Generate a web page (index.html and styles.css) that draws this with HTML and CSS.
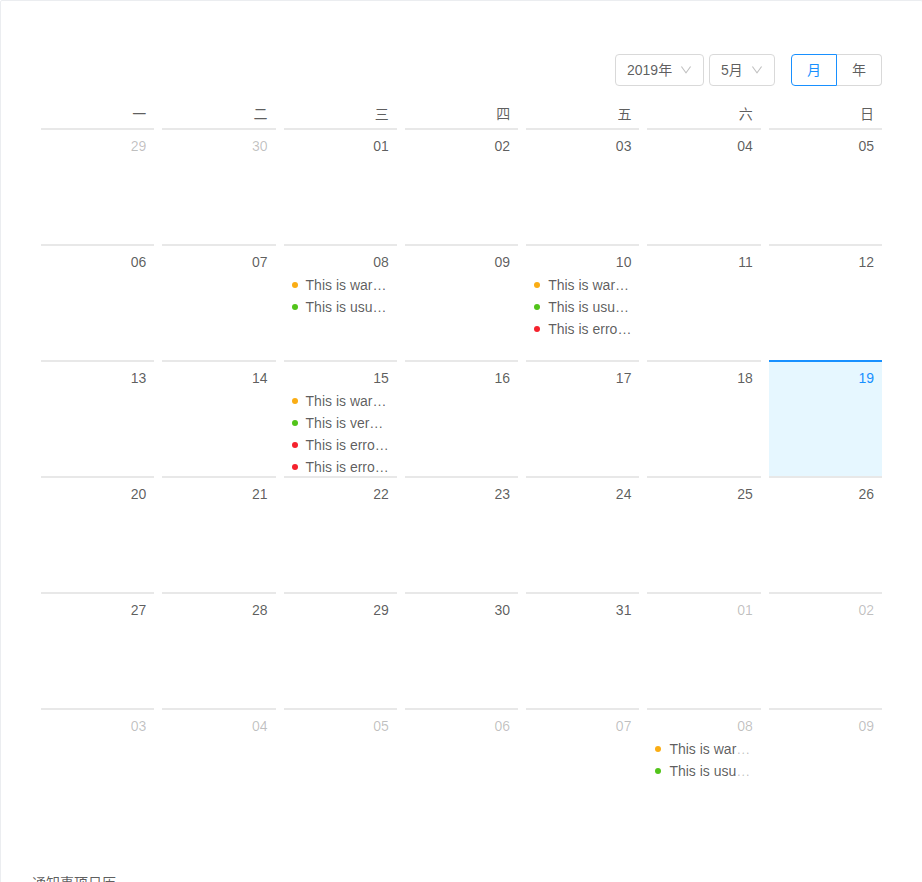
FILE: index.html
```html
<!DOCTYPE html>
<html lang="zh">
<head>
<meta charset="utf-8">
<title>通知事项日历</title>
<link rel="stylesheet" href="styles.css">
</head>
<body>
<div class="code-box">
  <div class="demo">
    <div class="cal-header">
      <div class="select year-select"><span>2019年</span><svg class="arrow" viewBox="64 64 896 896"><path d="M884 256h-75c-5.1 0-9.9 2.5-12.9 7L512 654.2 227.9 263c-3-4.5-7.8-7-12.9-7h-75c-6.5 0-10.3 7.4-6.5 12.7l352.6 486.1c12.8 17.6 39 17.6 51.7 0l352.6-486.1c3.900-5.3.1-12.7-6.4-12.7z"/></svg></div>
      <div class="select month-select"><span>5月</span><svg class="arrow" viewBox="64 64 896 896"><path d="M884 256h-75c-5.1 0-9.9 2.5-12.9 7L512 654.2 227.9 263c-3-4.5-7.8-7-12.9-7h-75c-6.5 0-10.3 7.4-6.5 12.7l352.6 486.1c12.8 17.6 39 17.6 51.7 0l352.6-486.1c3.900-5.3.1-12.7-6.4-12.7z"/></svg></div>
      <div class="radio-group">
        <span class="radio-btn checked">月</span><span class="radio-btn">年</span>
      </div>
    </div>
    <div class="cal-body">
      <div class="grid week">
        <div class="th">一</div><div class="th">二</div><div class="th">三</div><div class="th">四</div><div class="th">五</div><div class="th">六</div><div class="th">日</div>
      </div>
      <div class="grid days">
        <div class="day other"><div class="val">29</div></div>
        <div class="day other"><div class="val">30</div></div>
        <div class="day"><div class="val">01</div></div>
        <div class="day"><div class="val">02</div></div>
        <div class="day"><div class="val">03</div></div>
        <div class="day"><div class="val">04</div></div>
        <div class="day"><div class="val">05</div></div>

        <div class="day"><div class="val">06</div></div>
        <div class="day"><div class="val">07</div></div>
        <div class="day"><div class="val">08</div>
          <ul class="events">
            <li><i class="dot warning"></i><span class="txt">This is warning event.</span></li>
            <li><i class="dot success"></i><span class="txt">This is usual event.</span></li>
          </ul>
        </div>
        <div class="day"><div class="val">09</div></div>
        <div class="day"><div class="val">10</div>
          <ul class="events">
            <li><i class="dot warning"></i><span class="txt">This is warning event.</span></li>
            <li><i class="dot success"></i><span class="txt">This is usual event.</span></li>
            <li><i class="dot error"></i><span class="txt">This is error event.</span></li>
          </ul>
        </div>
        <div class="day"><div class="val">11</div></div>
        <div class="day"><div class="val">12</div></div>

        <div class="day"><div class="val">13</div></div>
        <div class="day"><div class="val">14</div></div>
        <div class="day"><div class="val">15</div>
          <ul class="events">
            <li><i class="dot warning"></i><span class="txt">This is warning event</span></li>
            <li><i class="dot success"></i><span class="txt">This is very long usual event。。....</span></li>
            <li><i class="dot error"></i><span class="txt">This is error event 1.</span></li>
            <li><i class="dot error"></i><span class="txt">This is error event 2.</span></li>
          </ul>
        </div>
        <div class="day"><div class="val">16</div></div>
        <div class="day"><div class="val">17</div></div>
        <div class="day"><div class="val">18</div></div>
        <div class="day today"><div class="val">19</div></div>

        <div class="day"><div class="val">20</div></div>
        <div class="day"><div class="val">21</div></div>
        <div class="day"><div class="val">22</div></div>
        <div class="day"><div class="val">23</div></div>
        <div class="day"><div class="val">24</div></div>
        <div class="day"><div class="val">25</div></div>
        <div class="day"><div class="val">26</div></div>

        <div class="day"><div class="val">27</div></div>
        <div class="day"><div class="val">28</div></div>
        <div class="day"><div class="val">29</div></div>
        <div class="day"><div class="val">30</div></div>
        <div class="day"><div class="val">31</div></div>
        <div class="day other"><div class="val">01</div></div>
        <div class="day other"><div class="val">02</div></div>

        <div class="day other"><div class="val">03</div></div>
        <div class="day other"><div class="val">04</div></div>
        <div class="day other"><div class="val">05</div></div>
        <div class="day other"><div class="val">06</div></div>
        <div class="day other"><div class="val">07</div></div>
        <div class="day other"><div class="val">08</div>
          <ul class="events">
            <li><i class="dot warning"></i><span class="txt">This is warning event.</span></li>
            <li><i class="dot success"></i><span class="txt">This is usual event.</span></li>
          </ul>
        </div>
        <div class="day other"><div class="val">09</div></div>
      </div>
    </div>
  </div>
  <div class="meta">
    <div class="title">通知事项日历</div>
  </div>
</div>
</body>
</html>
```

FILE: styles.css
```css
html, body {
  margin: 0;
  padding: 0;
  overflow: hidden;
  background: #fff;
}
* { box-sizing: border-box; }
body {
  font-family: "Liberation Sans", "Noto Sans CJK SC", sans-serif;
  font-size: 14px;
  color: rgba(0, 0, 0, 0.65);
  line-height: 1.5;
}
.code-box {
  width: 923px;
  border: 1px solid #ebedf0;
  border-radius: 2px;
}
.demo {
  padding: 42px 24px 50px;
  border-bottom: 1px solid #ebedf0;
}
.cal-header {
  display: flex;
  justify-content: flex-end;
  align-items: center;
  padding: 11px 16px 11px 0;
}
.select {
  height: 32px;
  border: 1px solid #d9d9d9;
  border-radius: 4px;
  display: flex;
  align-items: center;
  justify-content: space-between;
  padding: 0 11px;
  color: rgba(0, 0, 0, 0.65);
  line-height: 30px;
}
.year-select { width: 89px; }
.month-select { width: 66px; margin-left: 5px; }
.arrow {
  width: 12px;
  height: 12px;
  fill: rgba(0, 0, 0, 0.25);
}
.radio-group {
  display: flex;
  margin-left: 16px;
}
.radio-btn {
  height: 32px;
  line-height: 30px;
  padding: 0 15px;
  border: 1px solid #d9d9d9;
  color: rgba(0, 0, 0, 0.65);
}
.radio-btn:first-child {
  border-radius: 4px 0 0 4px;
}
.radio-btn:last-child {
  border-radius: 0 4px 4px 0;
  border-left: 0;
  width: 45px;
}
.radio-btn.checked {
  border-color: #1890ff;
  color: #1890ff;
  width: 46px;
}
.cal-body {
  padding: 8px 16px;
}
.grid {
  display: grid;
  grid-template-columns: repeat(7, minmax(0, 1fr));
  column-gap: 8px;
}
.th {
  text-align: right;
  padding-right: 8px;
  padding-bottom: 5px;
  line-height: 18px;
  color: rgba(0, 0, 0, 0.65);
}
.days {
  grid-auto-rows: 116px;
}
.day {
  min-width: 0;
  border-top: 2px solid #e8e8e8;
  padding: 4px 8px 0;
  height: 116px;
  color: rgba(0, 0, 0, 0.65);
}
.day.other {
  color: rgba(0, 0, 0, 0.25);
}
.day.today {
  background: #e6f7ff;
  border-top-color: #1890ff;
}
.day.today .val {
  color: #1890ff;
}
.val {
  line-height: 24px;
  text-align: right;
}
.events {
  list-style: none;
  margin: 0;
  padding: 0;
  height: 88px;
  overflow: hidden;
}
.events li {
  line-height: 22px;
  white-space: nowrap;
  overflow: hidden;
  text-overflow: ellipsis;
}
.dot {
  display: inline-block;
  width: 6px;
  height: 6px;
  border-radius: 50%;
  vertical-align: middle;
  position: relative;
  top: -1px;
}
.dot.warning { background: #faad14; }
.dot.success { background: #52c41a; }
.dot.error { background: #f5222d; }
.txt {
  margin-left: 8px;
  color: rgba(0, 0, 0, 0.65);
}
.meta {
  position: relative;
  height: 40px;
}
.title {
  position: absolute;
  top: -11px;
  left: 23px;
  padding: 0 8px;
  background: #fff;
  line-height: 22px;
  color: rgba(0, 0, 0, 0.65);
}
```
